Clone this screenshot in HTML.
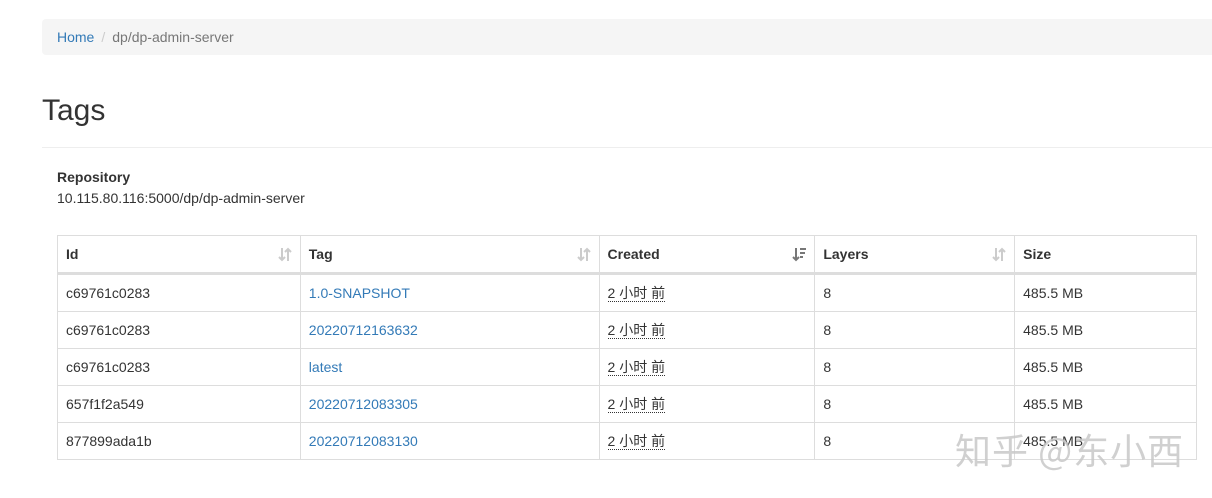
<!DOCTYPE html><html><head><meta charset="utf-8"><style>
body{margin:0;width:1212px;height:498px;background:#fff;font-family:"Liberation Sans","Noto Sans CJK SC",sans-serif;font-size:14px;color:#333;position:relative;overflow:hidden}
.bc{position:absolute;left:42px;top:19px;width:1170px;height:36px;background:#f5f5f5;border-radius:4px 0 0 4px;line-height:37px;box-sizing:border-box;padding-left:15px}
.bc a{color:#337ab7}.bc .s{color:#ccc;padding:0 7px}.bc .c{color:#777}
h1{position:absolute;left:42px;top:93px;margin:0;font-weight:400;font-size:30px;line-height:36px}
.hr{position:absolute;left:42px;top:147px;width:1170px;border-top:1px solid #eee}
.rl{position:absolute;left:57px;top:169px;font-weight:bold}
.rv{position:absolute;left:57px;top:190px}
table{position:absolute;left:57px;top:235px;border-collapse:collapse;width:1140px}
td,th{border:1px solid #ddd;padding:0 8px;height:36px;text-align:left;position:relative}
th{height:36px;border-bottom:3px solid #ddd;font-weight:bold}
a{color:#337ab7;text-decoration:none}
.ic{position:absolute;right:8px;top:11px}
.t{border-bottom:1px dotted #333}
.wm{position:absolute;left:955px;top:424px;font-size:36px;color:rgba(200,200,200,.85);font-family:"Noto Sans CJK SC",sans-serif;letter-spacing:1px;line-height:50px}
</style></head><body>
<div class="bc"><a>Home</a><span class="s">/</span><span class="c">dp/dp-admin-server</span></div>
<h1>Tags</h1><div class="hr"></div>
<div class="rl">Repository</div><div class="rv">10.115.80.116:5000/dp/dp-admin-server</div>
<table>
<colgroup><col style="width:243px"><col style="width:299px"><col style="width:216px"><col style="width:200px"><col style="width:182px"></colgroup>
<tr><th>Id<svg class="ic" width="14" height="15" viewBox="0 0 14 15"><path d="M4 1v12M1 10l3 3 3-3M10 14V2M7 5l3-3 3 3" stroke="#ccc" stroke-width="2" fill="none"/></svg></th>
<th>Tag<svg class="ic" width="14" height="15" viewBox="0 0 14 15"><path d="M4 1v12M1 10l3 3 3-3M10 14V2M7 5l3-3 3 3" stroke="#ccc" stroke-width="2" fill="none"/></svg></th>
<th>Created<svg class="ic" width="14" height="15" viewBox="0 0 14 15"><path d="M4 1v12M1 10l3 3 3-3M8 2h6M8 6h5M8 10h3" stroke="#777" stroke-width="2" fill="none"/></svg></th>
<th>Layers<svg class="ic" width="14" height="15" viewBox="0 0 14 15"><path d="M4 1v12M1 10l3 3 3-3M10 14V2M7 5l3-3 3 3" stroke="#ccc" stroke-width="2" fill="none"/></svg></th><th>Size</th></tr>
<tr><td>c69761c0283</td><td><a>1.0-SNAPSHOT</a></td><td><span class="t">2 小时 前</span></td><td>8</td><td>485.5 MB</td></tr>
<tr><td>c69761c0283</td><td><a>20220712163632</a></td><td><span class="t">2 小时 前</span></td><td>8</td><td>485.5 MB</td></tr>
<tr><td>c69761c0283</td><td><a>latest</a></td><td><span class="t">2 小时 前</span></td><td>8</td><td>485.5 MB</td></tr>
<tr><td>657f1f2a549</td><td><a>20220712083305</a></td><td><span class="t">2 小时 前</span></td><td>8</td><td>485.5 MB</td></tr>
<tr><td>877899ada1b</td><td><a>20220712083130</a></td><td><span class="t">2 小时 前</span></td><td>8</td><td>485.5 MB</td></tr>
</table>
<div class="wm">知乎 @东小西</div>
</body></html>
